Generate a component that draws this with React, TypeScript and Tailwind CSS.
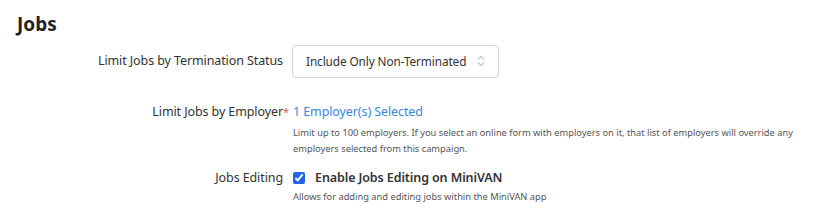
import { useState } from 'react';

export default function App() {
  const [status, setStatus] = useState('non-terminated');
  const [editing, setEditing] = useState(true);

  return (
    <div
      className="w-[820px] h-[218px] bg-white text-[#333] overflow-hidden"
      style={{ fontFamily: '"Segoe UI", "Noto Sans", sans-serif' }}
    >
      <h2 className="pl-[17px] pt-[12px] text-[19px] font-bold leading-[24px] text-[#222]">Jobs</h2>

      <div className="mt-[9px] flex flex-col">
        {/* Termination status */}
        <div className="flex items-center">
          <label className="w-[283px] text-right text-[12.5px] tracking-[-0.1px] text-[#333]">
            Limit Jobs by Termination Status
          </label>
          <div className="ml-[9px] relative">
            <select
              value={status}
              onChange={(e) => setStatus(e.target.value)}
              className="appearance-none w-[207px] h-[33px] rounded-[4px] border border-[#d4d4d4] bg-white pl-[13px] pr-[24px] text-[11.8px] tracking-[-0.1px] text-[#333] outline-none"
            >
              <option value="non-terminated">Include Only Non-Terminated</option>
              <option value="all">Include All</option>
              <option value="terminated">Include Only Terminated</option>
            </select>
            <svg
              className="pointer-events-none absolute right-[14px] top-[10px]"
              width="8"
              height="12"
              viewBox="0 0 8 12"
              fill="none"
              stroke="#999"
              strokeWidth="1"
            >
              <path d="M1 4.5 L4 1.5 L7 4.5" />
              <path d="M1 7.5 L4 10.5 L7 7.5" />
            </svg>
          </div>
        </div>

        {/* Employer */}
        <div className="mt-[23px] flex">
          <div className="w-[283px] text-right text-[12.5px] tracking-[-0.1px] leading-[22px] text-[#333] relative">
            Limit Jobs by Employer
            <span className="absolute -right-[6px] top-[0px] text-[#e55] text-[11px]">*</span>
          </div>
          <div className="ml-[10px] flex flex-col">
            <a href="#" className="text-[12.5px] tracking-[-0.1px] leading-[22px] text-[#3a85dd]">
              1 Employer(s) Selected
            </a>
            <p className="mt-[2px] w-[510px] text-[9.3px] leading-[16px] text-[#555]">
              Limit up to 100 employers. If you select an online form with employers on it, that list of employers will override any employers selected from this campaign.
            </p>
          </div>
        </div>

        {/* Jobs editing */}
        <div className="mt-[10px] flex">
          <div className="w-[283px] text-right text-[12.5px] tracking-[-0.1px] leading-[22px] text-[#333]">Jobs Editing</div>
          <div className="ml-[10px] flex flex-col">
            <label className="flex items-center h-[22px]">
              <input
                type="checkbox"
                checked={editing}
                onChange={(e) => setEditing(e.target.checked)}
                className="w-[12px] h-[12px] accent-[#2563eb] m-0"
              />
              <span className="ml-[10px] text-[12.5px] tracking-[-0.1px] font-semibold text-[#333]">
                Enable Jobs Editing on MiniVAN
              </span>
            </label>
            <p className="mt-0 text-[9.3px] leading-[16px] text-[#555]">
              Allows for adding and editing jobs within the MiniVAN app
            </p>
          </div>
        </div>
      </div>
    </div>
  );
}
